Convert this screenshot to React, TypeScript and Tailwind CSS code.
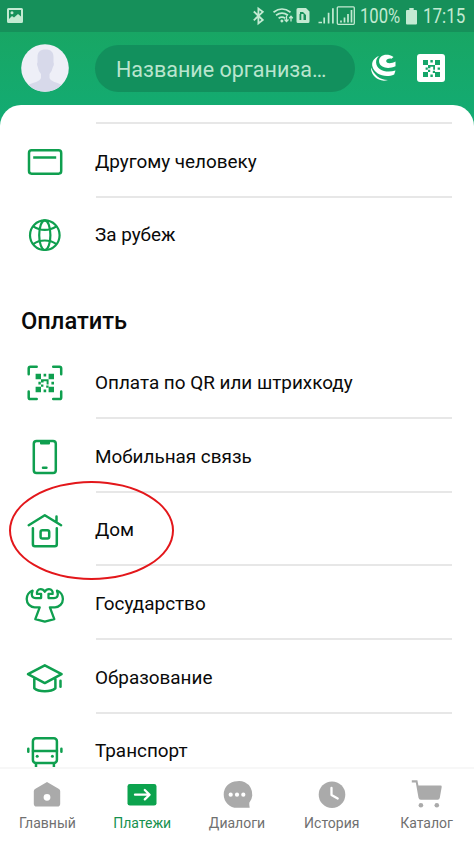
import type { ReactNode } from 'react';
import clsx from 'clsx';

type Row = { label: string; icon: ReactNode };

const QrDots = () => (
  <g fill="currentColor" stroke="none">
    <path d="M0 0h5.4v5.4H0zM13 0h5.4v5.4H13zM0 13h5.4v5.4H0zM13 13h5.4v5.4H13z" />
    <path d="M8 0h2.6v2.6H8zM5.4 5.4H13v2H8v1.4H5.4zM2.8 8h2.4v2.6H2.8zM11 7.4h2v3.2h-5.2V13H5.4v-2.4h5.6zM15.8 8h2.6v2.6h-2.6zM8 15.8h2.6v2.6H8zM10.6 11.6H13V14h-2.4z" />
  </g>
);

const LineIcon = ({ children }: { children: ReactNode }) => (
  <svg
    viewBox="0 0 40 40"
    className="h-10 w-10 shrink-0 text-[#0f9f4f]"
    fill="none"
    stroke="currentColor"
    strokeWidth="2.5"
    strokeLinecap="round"
    strokeLinejoin="round"
  >
    {children}
  </svg>
);

const transferRows: Row[] = [
  {
    label: 'Другому человеку',
    icon: (
      <>
        <rect x="4" y="8.3" width="32.2" height="23.4" rx="2.6" />
        <path d="M8.2 15.4h23" strokeLinecap="butt" />
      </>
    ),
  },
  {
    label: 'За рубеж',
    icon: (
      <g strokeWidth="2.2">
        <circle cx="19.8" cy="19.2" r="14.8" />
        <ellipse cx="19.8" cy="19.2" rx="5.6" ry="14.8" />
        <path d="M8.6 10.6c6.5 4.4 15.9 4.4 22.4 0M8.6 27.8c6.5-4.4 15.9-4.4 22.4 0" />
      </g>
    ),
  },
];

const payRows: Row[] = [
  {
    label: 'Оплата по QR или штрихкоду',
    icon: (
      <g transform="translate(-.3 -.2)">
        <path d="M4 11.5V5.7q0-1.7 1.7-1.7H12M28.5 4h6.3q1.7 0 1.7 1.7v5.8M36.5 28.8v5.8q0 1.7-1.7 1.7h-6.3M12 36.3H5.7Q4 36.3 4 34.6v-5.8" />
        <g transform="translate(10.9 11)">
          <QrDots />
        </g>
      </g>
    ),
  },
  {
    label: 'Мобильная связь',
    icon: (
      <>
        <rect x="8.8" y="4" width="22" height="32" rx="2.8" />
        <path d="M15 5h10v1.6q0 1-1 1h-8q-1 0-1-1z" fill="currentColor" stroke="none" />
        <path d="M18 30.8h3.4" />
      </>
    ),
  },
  {
    label: 'Дом',
    icon: (
      <>
        <path d="M3.7 14.2 19.8 4.3l16.3 9.9M31.5 5.4v5.6" />
        <path d="M7.9 17.2v16q0 2 2 2h19.9q2 0 2-2v-16" />
        <rect x="15.6" y="19.3" width="8.6" height="8.2" rx="1.8" />
      </>
    ),
  },
  {
    label: 'Государство',
    icon: (
      <path
        strokeWidth="2.3"
        d="M7.6 6.7C4 7.900 1.700 11.500 1.700 15.100c0 4.600 3.600 8.200 8 8.200h5L10.300 35.100l9.500 2.500 9.500-2.500-4.400-11.800h5c4.400 0 8-3.600 8-8.200 0-3.600-2.300-7.200-5.900-8.400 1.800 4.500.6 7.400-3.300 7.400h-5.200V9.900h4.100c.6-2.600-1-4.700-3.600-4.700-1.900 0-3.200.8-4.200 2.500-1-1.700-2.300-2.500-4.200-2.500-2.600 0-4.200 2.100-3.600 4.700h4.100v4.200h-5.200C7 14.100 5.800 11.200 7.600 6.700z"
      />
    ),
  },
  {
    label: 'Образование',
    icon: (
      <>
        <path d="M3 16.200 19.800 7.300l16.800 8.900-16.800 8.900zM9.300 21v9.200c4.500 4 16.600 4 21.100 0V21" />
        <path d="M35.500 22.800v6" />
      </>
    ),
  },
  {
    label: 'Транспорт',
    icon: (
      <>
        <rect x="7.900" y="6.300" width="24" height="24.800" rx="3" />
        <path d="M8 18.900h24M11 31.700v3M28.900 31.700v3M3.300 16.700v3M36.400 16.700v3" />
        <g fill="currentColor" stroke="none">
          <circle cx="12.200" cy="24.300" r="1.500" />
          <circle cx="27.400" cy="24.300" r="1.500" />
        </g>
      </>
    ),
  },
];

const tabs = [
  {
    label: 'Главный',
    icon: <path fillRule="evenodd" d="M20 6 32 13q1.200.8 1.200 2.300v12.500q0 2.800-2.800 2.800H9.600q-2.800 0-2.800-2.800V15.300Q6.800 13.800 8 13zM20 17.900a3.400 3.400 0 1 0 0 6.800 3.400 3.400 0 0 0 0-6.800z" />,
  },
  {
    label: 'Платежи',
    active: true,
    icon: (
      <>
        <rect x="5.500" y="8" width="29" height="21.600" rx="2.400" />
        <path d="M13 18.700h14M22.800 14l4.800 4.700-4.800 4.700" fill="none" stroke="#fff" strokeWidth="2.300" strokeLinecap="round" strokeLinejoin="round" />
      </>
    ),
  },
  {
    label: 'Диалоги',
    icon: (
      <>
        <path d="M20 5.200a13.300 13.300 0 1 0 0 26.600h12.700q-.6-2.500-.4-5a13.300 13.300 0 0 0-12.300-21.600z" />
        <g fill="#fff">
          <circle cx="13.700" cy="18.700" r="2.100" />
          <circle cx="20" cy="18.700" r="2.100" />
          <circle cx="26.300" cy="18.700" r="2.100" />
        </g>
      </>
    ),
  },
  {
    label: 'История',
    icon: (
      <>
        <circle cx="20" cy="18.700" r="13.300" />
        <path d="M19.500 12v7l6.200 3.500" fill="none" stroke="#fff" strokeWidth="2.300" strokeLinecap="round" strokeLinejoin="round" />
      </>
    ),
  },
  {
    label: 'Каталог',
    icon: (
      <>
        <path d="M4.800 4.200h5.600l1 5.300h22.200q1.300 0 1.100 1.400l-1.900 10.800q-.3 2-2.200 2H13.800q-1.900 0-2.300-2L8.800 6.600h-4z" />
        <circle cx="13.900" cy="29.200" r="2.300" />
        <circle cx="29.800" cy="29.200" r="2.300" />
      </>
    ),
  },
];

const StatusBar = () => (
  <div className="flex h-8 shrink-0 items-center justify-between bg-[#16905a] pl-[7px] text-[#c3ead2]">
    <svg viewBox="0 0 16 16" className="h-4 w-4" fill="currentColor">
      <path fillRule="evenodd" d="M1.500 0h13Q16 0 16 1.500v12q0 1.500-1.500 1.500h-13Q0 15 0 13.500v-12Q0 0 1.500 0zM2 2v9l3-3 2 1.500L11 6l3 2.500V2zM5 3.300a1.500 1.500 0 1 1 0 3 1.500 1.500 0 0 1 0-3z" />
    </svg>
    <div className="flex h-8 w-[222px] items-center">
      <svg viewBox="252 0 108 32" className="h-8 w-[108px] shrink-0" fill="none" stroke="currentColor">
        <path d="m253.800 11.500 9 8.500-4.400 3.500v-15l4.400 3.300-9 8.500" strokeWidth="1.800" />
        <g strokeWidth="1.700">
          <path d="M273.500 12.200q8.500-6.400 17 0M276 15.300q6-4.300 12 0M278.600 18.200q3.400-2.300 6.600 0" />
          <path d="M286.500 15.500v6M284.500 19.500l2 2 2-2M291 21.500v-5M289.200 18.200l1.800-2 1.800 2" strokeWidth="1.300" />
        </g>
        <path d="M281.900 19.300l1.800 1.600-1.800 1.800-1.800-1.800z" fill="currentColor" stroke="none" />
        <path fillRule="evenodd" d="M298 8h8l3.500 3.500v10q0 1.500-1.500 1.500h-10q-1.500 0-1.500-1.500v-12q0-1.500 1.500-1.500zm2 4v2h-.5v6h1.800v-6h2.200v6h2.500v-5l-3-3z" fill="currentColor" stroke="none" />
        <path d="M318.500 22.500h3.500M324.200 23.500v-6M328.600 23.500V12.700M332.900 23.500V8.200" strokeWidth="1.700" />
        <rect x="337.300" y="6.800" width="17" height="17.500" rx="1" strokeWidth="1.300" />
        <path d="M341 22.500v-2M344.500 22.500v-5M348 22.500V14M351.500 22.500V10" strokeWidth="1.700" />
      </svg>
      <div className="flex w-[46px] items-center">
        <span className="origin-left scale-x-[0.83] font-['Roboto'] text-[20px] leading-none">100%</span>
      </div>
      <svg viewBox="0 0 11 17" className="h-[17px] w-[11px] shrink-0" fill="currentColor">
        <path d="M3.300 0h4.400v2H10q1 0 1 1v12.500q0 1-1 1H1q-1 0-1-1V3q0-1 1-1h2.300z" />
      </svg>
      <span className="ml-1.5 origin-left scale-x-[0.85] font-['Roboto'] text-[20px] leading-none">17:15</span>
    </div>
  </div>
);

const Header = () => (
  <header className="flex h-24 shrink-0 items-start bg-linear-to-b from-[#18a664] to-[#12ac74] pt-[13px] pl-[21px]">
    <svg viewBox="0 0 48 48" className="-mt-px h-12 w-12 shrink-0">
      <defs>
        <clipPath id="avatar">
          <circle cx="24" cy="24" r="23.800" />
        </clipPath>
      </defs>
      <g clipPath="url(#avatar)">
        <path d="M0 0h48v48H0z" fill="#eeeff7" />
        <path
          d="M16.500 13C16.500 8 19 5.500 24.500 5.500S32.500 8 32.500 13v5.500q1 1.500-.6 4.500-.9 4.500-3.400 7v4q1 3 8 5 5 1.500 8 5v5H3v-5q3-3.500 9-5 7-2 8-5v-4q-2.500-2.500-3.200-7-1.400-3-.3-4.500z"
          fill="#d7d9ea"
        />
      </g>
    </svg>
    <div className="ml-[26px] flex h-[47px] w-[260px] shrink-0 items-center rounded-full bg-[#12905d] pt-[3px] pl-[21px]">
      <span className="whitespace-nowrap font-['Roboto'] text-[21.500px] text-[#b9e5ce]">Название организа…</span>
    </div>
    <svg viewBox="0 0 26 28" className="mt-[9px] ml-4 h-7 w-[26px] shrink-0" fill="#fff">
      <path d="M0 13.500C-.5 21.500 8 29 17 26 8.500 26 3 20.500 0 13.500z" />
      <path d="M8 2C2.500 4 .2 8.500 1.500 12.800 3.700 20.200 14 24.500 23.200 20.500L24.500 16.500C15 19.500 5.700 16 5.100 8.700 4.900 6 6 4 8 2z" />
      <path d="M19 1.200C12-.8 6.800 3.500 8.300 8.800 9.800 13.700 17 15.500 24.500 12.300V7.600c-3.700 2-9 2.300-9.300-.3-.2-2 2.400-3.100 5.300-2.600l2-1.700q-1.500-1.300-3.500-1.800z" />
    </svg>
    <div className="mt-[9px] ml-5 flex h-7 w-7 shrink-0 items-center justify-center rounded-[3px] bg-white text-[#15a569]">
      <svg viewBox="0 0 18.400 18.400" className="h-[17px] w-[17px]">
        <QrDots />
      </svg>
    </div>
  </header>
);

const List = ({ rows }: { rows: Row[] }) => (
  <ul>
    {rows.map((row, i) => (
      <li key={row.label} className="flex h-[73.700px] pr-[22px] pl-[25px]">
        <div className="flex w-[71px] items-center pt-0.5">
          <LineIcon>{row.icon}</LineIcon>
        </div>
        <div
          className={clsx(
            'flex flex-1 items-center border-b-2 pt-1',
            i === rows.length - 1 ? 'border-transparent' : 'border-[#e7e7e7]',
          )}
        >
          <span className="-ml-px whitespace-nowrap font-['Roboto'] text-[18.900px] text-[#0a0a0a]">{row.label}</span>
        </div>
      </li>
    ))}
  </ul>
);

const TabBar = () => (
  <nav className="grid h-[75px] shrink-0 grid-cols-5 border-t-2 border-[#f7f7f7] bg-white">
    {tabs.map((tab) => (
      <div
        key={tab.label}
        className={clsx('flex flex-col items-center pt-[7px]', tab.active ? 'text-[#0ca34e]' : 'text-[#aaa]')}
      >
        <svg viewBox="0 0 40 40" className="h-10 w-10" fill="currentColor">
          {tab.icon}
        </svg>
        <span
          className={clsx(
            "-mt-px font-['Roboto'] text-[14px] leading-4",
            tab.active ? 'text-[#17914f]' : 'text-[#707070]',
          )}
        >
          {tab.label}
        </span>
      </div>
    ))}
  </nav>
);

export default function App() {
  return (
    <div className="relative flex h-[842px] w-[474px] flex-col overflow-hidden bg-white font-['Roboto',sans-serif]">
      <StatusBar />
      <Header />
      <main className="-mt-[23px] min-h-0 flex-1 overflow-hidden rounded-t-[21px] bg-white">
        <div className="mr-[22px] ml-24 h-[19px] border-b-2 border-[#e7e7e7]" />
        <List rows={transferRows} />
        <h2 className="flex h-[74px] items-center pt-[27px] pl-[21px] font-['Roboto'] text-[23.700px] font-medium text-[#0a0a0a]">
          Оплатить
        </h2>
        <List rows={payRows} />
      </main>
      <TabBar />

      {/* Marker around the «Дом» row */}
      <div className="pointer-events-none absolute top-[481px] left-[9px] h-[99px] w-[165px] rounded-[50%] border-2 border-[#e3171b]" />
    </div>
  );
}
